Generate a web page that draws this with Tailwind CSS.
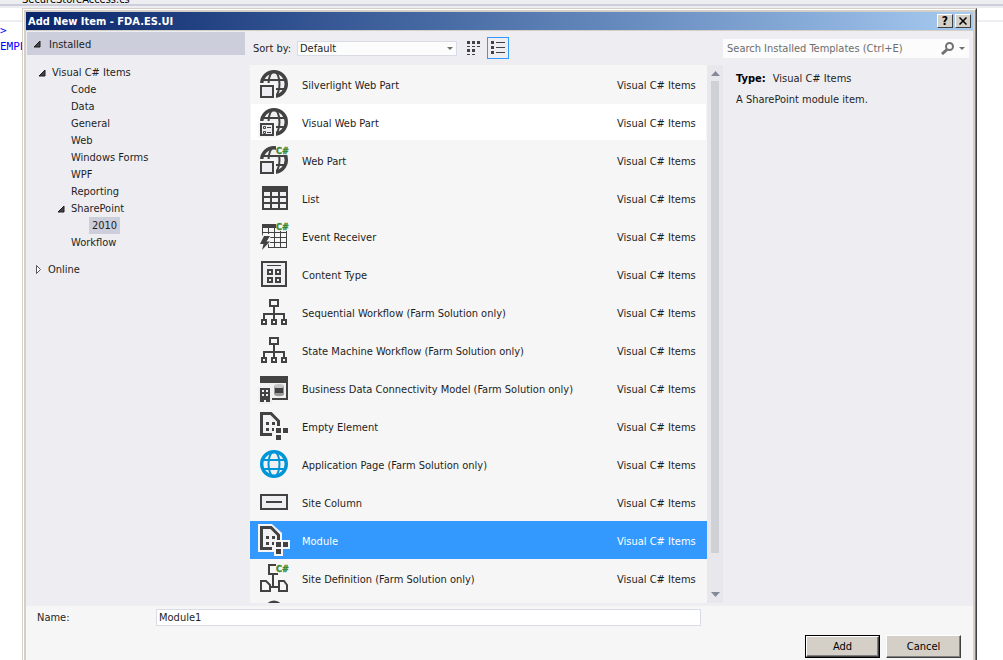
<!doctype html>
<html lang="en">

<head>
  <meta charset="UTF-8" />
  <meta name="viewport" content="width=device-width, initial-scale=1.0" />
  <title>Add New Item - FDA.ES.UI</title>
  <script src="https://cdn.jsdelivr.net/npm/@tailwindcss/browser@4"></script>
</head>

<body class="relative h-screen overflow-hidden bg-white font-['DejaVu_Sans_Condensed','DejaVu_Sans',sans-serif] text-[11px] leading-[17px] text-[#1e1e1e]">
  <!-- icon shapes -->
  <svg class="hidden">
    <symbol id="globe" viewBox="0 0 32 32">
      <g fill="none" stroke="currentColor">
        <circle cx="16" cy="16" r="12.3" fill="#f0f0f3" stroke-width="3.4" />
        <ellipse cx="16" cy="16" rx="5.5" ry="12.5" stroke-width="2" />
        <path d="M4 12h24M4 21h24" stroke-width="2" />
      </g>
    </symbol>
    <symbol id="csharp" viewBox="0 0 32 32">
      <path d="M18 0h14v11H18z" fill="#f6f6f6" />
      <text x="18" y="10" font-size="9" font-weight="bold" fill="#388a34" stroke="#388a34" stroke-width=".4">C#</text>
    </symbol>
    <symbol id="silverlight-part" viewBox="0 0 32 32">
      <use href="#globe" />
      <path d="M0 15h18v17H0z" fill="#f6f6f6" />
      <path d="M3 18h12v11H3z" fill="#eeeef2" stroke="currentColor" stroke-width="2" />
    </symbol>
    <symbol id="visual-part" viewBox="0 0 32 32">
      <use href="#globe" />
      <path d="M0 15h18v17H0z" fill="#f6f6f6" />
      <path d="M3 18h12v11H3z" fill="#eeeef2" stroke="currentColor" stroke-width="2" />
      <path d="M5.500 20.500h2v2h-2zM5.500 25.500h2v2h-2zM9 21.500h4M9 26.500h4" fill="none" stroke="currentColor" />
    </symbol>
    <symbol id="web-part" viewBox="0 0 32 32">
      <use href="#silverlight-part" />
      <use href="#csharp" />
    </symbol>
    <symbol id="list" viewBox="0 0 32 32">
      <path d="M4 4h26v24H4z" fill="currentColor" />
      <path d="M6 10h6v4H6zM14 10h6v4h-6zM22 10h6v4h-6zM6 16h6v4H6zM14 16h6v4h-6zM22 16h6v4h-6zM6 22h6v4H6zM14 22h6v4h-6zM22 22h6v4h-6z" fill="#f2f2f5" />
    </symbol>
    <symbol id="event" viewBox="0 0 32 32">
      <path d="M4 4h14v4H4z" fill="currentColor" />
      <path d="M4.500 8v8M10.500 8v20M16.500 8v20M22.500 11v17M28.500 11v17M4 12.500h25M4 17.500h25M10 22.500h19M10 27.500h19" stroke="currentColor" fill="none" />
      <path d="M5 14h9l-3 6h3L4 32H1l1-8H1z" fill="#f6f6f6" />
      <path d="M6 16h6l-3.500 5.500H12L4 30l1.500-6H2z" fill="currentColor" />
      <use href="#csharp" />
    </symbol>
    <symbol id="content-type" viewBox="0 0 32 32">
      <path d="M4 4h24v24H4z" fill="#f0f0f3" stroke="currentColor" stroke-width="2" />
      <path d="M9 7.500h14" stroke="currentColor" />
      <path d="M10 12h4v4h-4zM18 12h4v4h-4zM10 20h4v4h-4zM18 20h4v4h-4z" fill="none" stroke="currentColor" stroke-width="2" />
    </symbol>
    <symbol id="workflow" viewBox="0 0 32 32">
      <path d="M12 4h8v6h-8zM4 24h4v4H4zM14 24h4v4h-4zM24 24h4v4h-4zM16 10v14M6 24v-6h20v6" fill="none" stroke="currentColor" stroke-width="2" />
    </symbol>
    <symbol id="business" viewBox="0 0 32 32">
      <path d="M2 4h28v24H14V14H2z" fill="currentColor" />
      <path d="M2 11h26v15H14v6H0V14h2z" fill="#f0f0f3" />
      <path d="M2 16h10v14H8v-2H6v2H2z" fill="currentColor" />
      <path d="M4 18h2v2H4zM8 18h2v2H8zM4 22h2v2H4zM8 22h2v2H8z" fill="#f0f0f3" />
      <path d="M16 14v8c0 3 10 3 10 0v-8z" fill="#999" />
      <path d="M17 16h8v5h-8z" fill="currentColor" />
      <ellipse cx="21" cy="14" rx="5" ry="2" fill="#c4c4c6" />
    </symbol>
    <symbol id="element" viewBox="0 0 32 32">
      <path d="M3.500 3.500H13l8 8V17h-5v7.500H3.500z" fill="#f2f2f5" />
      <path d="M14 24.500H3.500v-21H13l7.500 7.500v5" fill="none" stroke="currentColor" stroke-width="3" />
      <path d="M8 12h3v3H8zM14 12h3v3h-3zM8 18h3v3H8zM14 18h2v3h-2zM18 18h5v5h-5zM25 18h5v5h-5zM18 25h5v5h-5z" fill="currentColor" />
    </symbol>
    <symbol id="module" viewBox="0 0 32 32">
      <path d="M0 0h14l10 9v7h8v9h-7v7h-9v-4H0z" fill="#f6f6f6" />
      <use href="#element" />
    </symbol>
    <symbol id="column" viewBox="0 0 32 32">
      <path d="M3 9h26v14H3z" fill="#f0f0f3" stroke="currentColor" stroke-width="2" />
      <path d="M8 16h16" stroke="currentColor" stroke-width="2" />
    </symbol>
    <symbol id="site" viewBox="0 0 32 32">
      <path d="M11 3h8v9h-8zM3 19h5l4 4v6H3zM21 19h5l3 4v6h-8zM15 12v12M12 25h9" fill="none" stroke="currentColor" stroke-width="2" />
      <use href="#csharp" />
    </symbol>
    <symbol id="cap" viewBox="0 0 32 32">
      <circle cx="16" cy="10" r="8" fill="none" stroke="currentColor" stroke-width="3" />
    </symbol>
    <symbol id="open" viewBox="0 0 8 8">
      <path d="M7 1v6H1z" fill="#444" stroke="#1e1e1e" />
    </symbol>
  </svg>

  <!-- editor behind the dialog -->
  <div class="absolute inset-x-0 top-0">
    <div class="h-1 overflow-hidden bg-[#eeeef2] pl-[22px] leading-[0px] text-black">SecureStoreAccess.cs</div>
    <div class="h-[2px] bg-[#cccedb]"></div>
    <div class="h-[2px] bg-[#eeeef2]"></div>
    <div class="h-3"></div>
    <div class="h-[2px] bg-[#eeeef2]"></div>
    <pre class="w-[22px] overflow-hidden pt-px font-['DejaVu_Sans_Mono',monospace] text-[11px] leading-4 text-[#0000ff]">&gt;
EMPL</pre>
  </div>

  <main class="relative flex h-full flex-col pt-2 pr-[26px] pl-[22px]">
    <div class="flex min-h-0 flex-1 flex-col border-t border-r border-l border-t-[#d4d0c8] border-r-[#404040] border-l-[#d4d0c8]">
      <div class="flex min-h-0 flex-1 flex-col border-t border-r border-l border-t-white border-r-[#808080] border-l-white">
        <div class="flex min-h-0 flex-1 flex-col border-x-2 border-t-2 border-[#d4d0c8] bg-[#eeeef2]">

          <header class="flex h-[18px] shrink-0 items-center bg-linear-to-r from-[#0a246a] to-[#a6caf0] px-[2px]">
            <h1 class="flex-1 font-bold text-white">Add New Item - FDA.ES.UI</h1>
            <button aria-label="Help" class="flex h-[14px] w-4 items-center justify-center border border-t-white border-r-[#404040] border-b-[#404040] border-l-white bg-[#d4d0c8] text-[12px] leading-3 font-bold text-black">?</button>
            <button aria-label="Close" class="ml-[2px] flex h-[14px] w-4 items-center justify-center border border-t-white border-r-[#404040] border-b-[#404040] border-l-white bg-[#d4d0c8]">
              <svg class="h-2 w-2" viewBox="0 0 8 8"><path d="M.5.5l7 7M7.500.5l-7 7" stroke="#000" stroke-width="1.500" /></svg>
            </button>
          </header>

          <div class="flex min-h-0 flex-1 border-t border-[#d4d0c8]">
            <!-- categories -->
            <nav class="w-[224px] shrink-0 pt-px pl-px">
              <div class="mr-[5px] flex h-[23px] items-center bg-[#cccedb] pt-px pl-[6px]">
                <svg class="mr-2 h-2 w-2"><use href="#open" /></svg>Installed
              </div>
              <ul class="pt-[9px]">
                <li class="flex items-center pl-[11px]"><svg class="mr-[6px] h-2 w-2"><use href="#open" /></svg>Visual C# Items</li>
                <li class="pl-11">Code</li>
                <li class="pl-11">Data</li>
                <li class="pl-11">General</li>
                <li class="pl-11">Web</li>
                <li class="pl-11">Windows Forms</li>
                <li class="pl-11">WPF</li>
                <li class="pl-11">Reporting</li>
                <li class="flex items-center pl-[30px]"><svg class="mr-[6px] h-2 w-2"><use href="#open" /></svg>SharePoint</li>
                <li class="flex pl-[62px]"><span class="w-[31px] bg-[#cccedb] text-center">2010</span></li>
                <li class="pl-11">Workflow</li>
              </ul>
              <div class="mt-[10px] flex items-center pl-[9px]">
                <svg class="mr-[7px] h-[9px] w-[5px]" viewBox="0 0 5 9"><path d="M.5.5v8l4-4z" fill="#fff" stroke="#555" /></svg>Online
              </div>
            </nav>

            <!-- templates -->
            <section class="flex min-w-0 flex-1 flex-col pb-[3px]">
              <div class="flex h-[34px] shrink-0 items-center pl-[3px]">
                <label for="sort" class="w-11 whitespace-nowrap">Sort by:</label>
                <div class="relative flex w-40">
                  <select id="sort" class="h-[15px] w-full appearance-none border border-[#d9dbe6] bg-[#fcfcfc] px-[2px] leading-[13px]">
                    <option>Default</option>
                    <option>Name Ascending</option>
                    <option>Name Descending</option>
                  </select>
                  <svg class="pointer-events-none absolute top-[6px] right-1 h-[3px] w-[6px]" viewBox="0 0 6 3"><path d="M0 0h6L3 3z" fill="#717171" /></svg>
                </div>
                <button aria-label="Small icons" class="mr-[3px] ml-[5px] flex h-[22px] w-[22px] items-center justify-center">
                  <svg class="h-[14px] w-[14px]" viewBox="0 0 14 14" shape-rendering="crispEdges"><path d="M1 0h3v3H1zM6 0h3v3H6zM11 0h3v3h-3zM1 5h3v1H1zM6 5h3v1H6zM11 5h3v1h-3zM1 8h3v3H1zM6 8h3v3H6zM1 13h3v1H1zM6 13h3v1H6z" fill="#424242" /></svg>
                </button>
                <button aria-label="Medium icons" class="flex h-[22px] w-[22px] items-center justify-center border border-[#3399ff]">
                  <svg class="h-[14px] w-[14px]" viewBox="0 0 14 14" shape-rendering="crispEdges"><path d="M0 0h3v3H0zM0 5h3v3H0zM0 10h3v3H0zM5 1h9v1H5zM5 6h9v1H5zM5 11h9v1H5z" fill="#424242" /></svg>
                </button>
              </div>

              <div class="flex min-h-0 flex-1">
                <ul id="templates" class="min-w-0 flex-1 overflow-hidden bg-[#f6f6f6] text-[#1e1e1e]"></ul>
                <div class="flex w-4 shrink-0 flex-col items-center bg-[#e8e8ec] py-[5px]">
                  <svg class="h-[6px] w-[9px]" viewBox="0 0 9 6"><path d="M0 6h9L4.500 1z" fill="#868999" /></svg>
                  <div class="mt-[5px] mb-[39px] w-2 flex-1 bg-[#d0d1d7]"></div>
                  <svg class="h-[6px] w-[9px]" viewBox="0 0 9 6"><path d="M0 0h9L4.500 5z" fill="#868999" /></svg>
                </div>
              </div>
            </section>

            <!-- details -->
            <aside class="w-[250px] shrink-0 pt-2 pr-1">
              <div class="flex h-[19px] items-center bg-[#fcfcfc] pr-1 pl-1">
                <input aria-label="Search Installed Templates" placeholder="Search Installed Templates (Ctrl+E)" class="min-w-0 flex-1 bg-transparent outline-none placeholder:text-[#6d6d6d]" />
                <button aria-label="Search" class="mr-1">
                  <svg class="h-[13px] w-[13px]" viewBox="0 0 13 13" fill="none" stroke="#717171"><circle cx="8.500" cy="4.500" r="3.500" stroke-width="2" /><path d="M6 7.500L1 12" stroke-width="3" /></svg>
                </button>
                <button aria-label="Search options" class="pl-px">
                  <svg class="h-[3px] w-[6px]" viewBox="0 0 6 3"><path d="M0 0h6L3 3z" fill="#717171" /></svg>
                </button>
              </div>
              <p class="mt-3 pl-[13px]"><b class="mr-1 text-black">Type:</b> Visual C# Items</p>
              <p class="mt-1 pl-[13px]">A SharePoint module item.</p>
            </aside>
          </div>

          <footer class="h-[54px] shrink-0 bg-[#f6f6f6] pt-[3px]">
            <div class="flex items-center pl-[11px]">
              <label for="name" class="w-[119px]">Name:</label>
              <input id="name" value="Module1" class="mr-[272px] h-[17px] min-w-0 flex-1 border border-[#d9dbe6] bg-white px-[2px] outline-none" />
            </div>
            <div class="mt-[9px] flex justify-end gap-[6px] pr-3 text-black">
              <button class="h-[23px] w-[75px] border border-black bg-[#d4d0c8]">
                <span class="flex h-[21px] items-center justify-center border border-t-white border-r-[#404040] border-b-[#404040] border-l-white shadow-[inset_-1px_-1px_#808080]">Add</span>
              </button>
              <button class="flex h-[23px] w-[75px] items-center justify-center border border-t-white border-r-[#404040] border-b-[#404040] border-l-white bg-[#d4d0c8] shadow-[inset_-1px_-1px_#808080]">Cancel</button>
            </div>
          </footer>
        </div>
      </div>
    </div>
  </main>

  <script>
    const templates = [
      ["silverlight-part", "Silverlight Web Part"],
      ["visual-part", "Visual Web Part", "hover"],
      ["web-part", "Web Part"],
      ["list", "List"],
      ["event", "Event Receiver"],
      ["content-type", "Content Type"],
      ["workflow", "Sequential Workflow (Farm Solution only)"],
      ["workflow", "State Machine Workflow (Farm Solution only)"],
      ["business", "Business Data Connectivity Model (Farm Solution only)"],
      ["element", "Empty Element"],
      ["globe", "Application Page (Farm Solution only)"],
      ["column", "Site Column"],
      ["module", "Module", "selected"],
      ["site", "Site Definition (Farm Solution only)"],
      ["cap", ""],
    ];
    const rowStyles = {
      hover: "border border-[#f6f6f6] bg-white pl-[7px] pr-[12px]",
      selected: "bg-[#3399ff] pl-2 pr-[13px] text-white",
      normal: "pl-2 pr-[13px]",
    };

    document.getElementById("templates").innerHTML = templates.map(([icon, name, state]) => `
      <li class="flex h-[38px] items-center ${rowStyles[state || "normal"]}">
        <svg class="mr-3 h-8 w-8 shrink-0 ${icon === "globe" ? "text-[#0095d7]" : "text-[#424242]"}"><use href="#${icon}" /></svg>
        <span class="flex-1 truncate pt-[2px]">${name}</span>
        <span class="w-[77px] pt-[2px] whitespace-nowrap">${name && "Visual C# Items"}</span>
      </li>`).join("");
  </script>
</body>

</html>
